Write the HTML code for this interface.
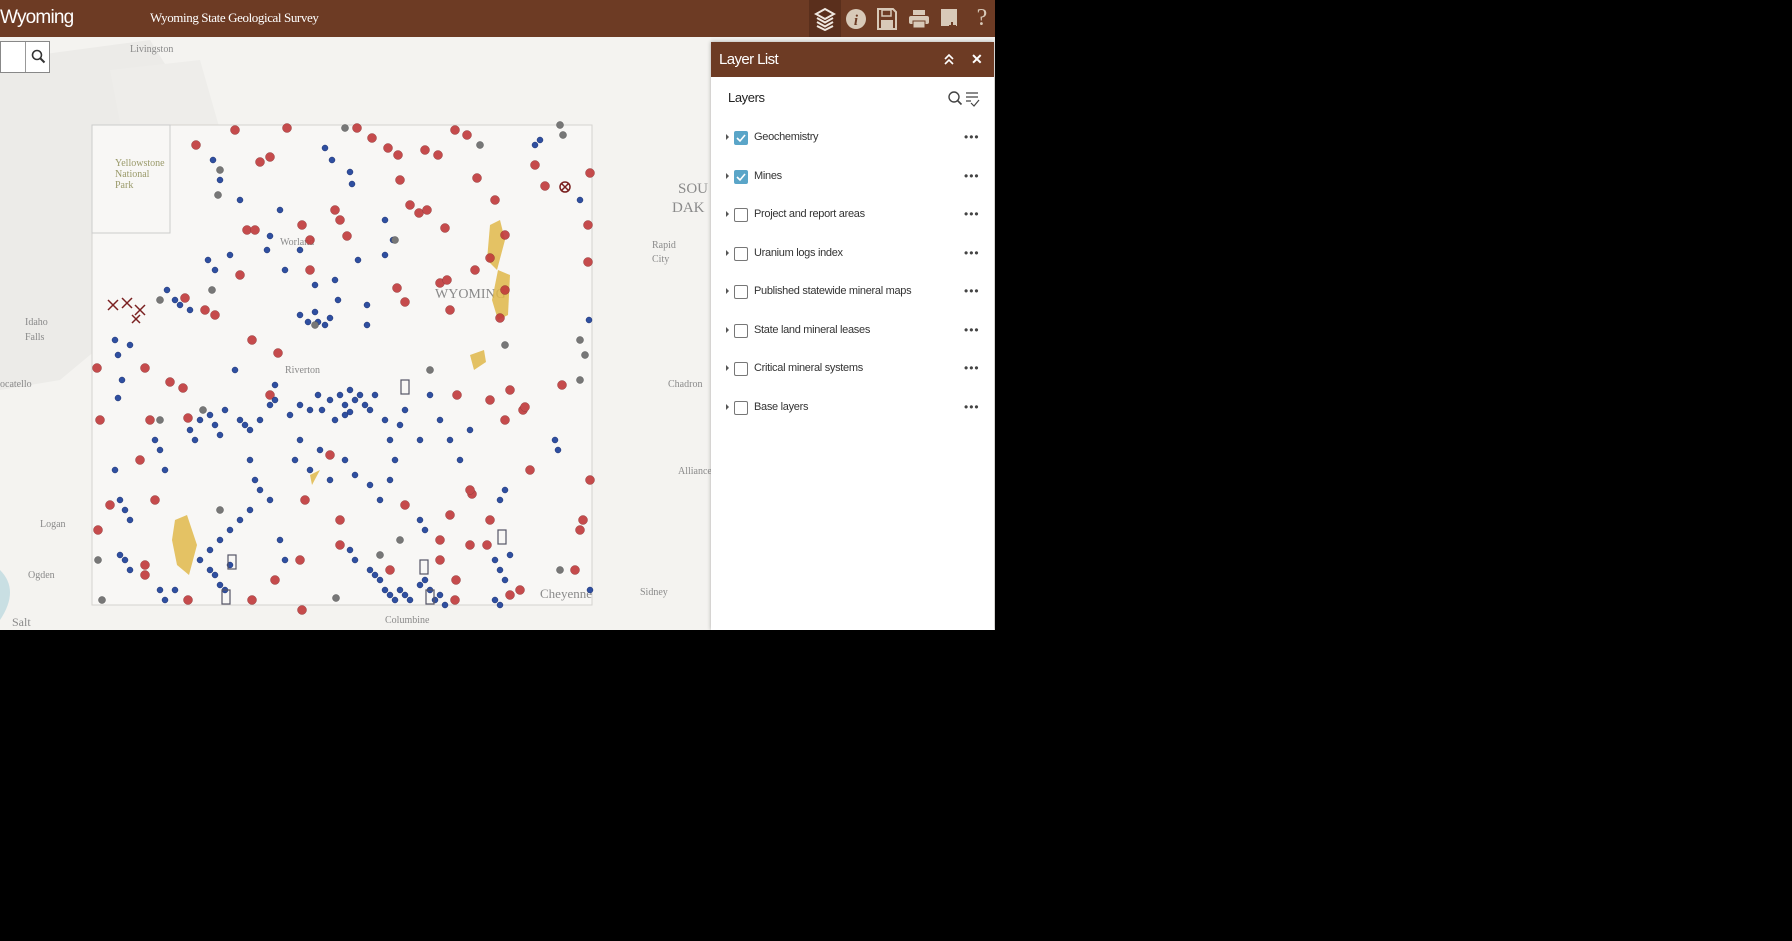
<!DOCTYPE html>
<html><head><meta charset="utf-8"><style>
*{margin:0;padding:0;box-sizing:border-box}
body{width:1792px;height:941px;background:#000;font-family:"Liberation Sans",sans-serif;position:relative;overflow:hidden}
#app{position:absolute;left:0;top:0;width:995px;height:630px;background:#f2f1ee;overflow:hidden}
#hdr{position:absolute;left:0;top:0;width:995px;height:37px;background:#6d3b24;color:#fff}
#hdr .t1{position:absolute;left:0;top:7px;font-size:19px;letter-spacing:-0.8px}
#hdr .t2{position:absolute;left:150px;top:10px;font-size:13px;font-family:"Liberation Serif",serif;letter-spacing:-0.4px}
.ic{position:absolute;top:0;width:32px;height:37px;display:flex;align-items:center;justify-content:center;color:#d8c9b8;font-size:22px}
#map{position:absolute;left:0;top:37px}
#srch{position:absolute;left:0;top:41px;width:50px;height:32px;background:#fff;border:1px solid #888}
#srch .b{position:absolute;left:24px;top:0;width:25px;height:30px;border-left:1px solid #999}
#panel{position:absolute;left:711px;top:42px;width:283px;height:588px;background:#fff;box-shadow:0 0 4px rgba(0,0,0,.3)}
#ph{height:35px;background:#6d3b24;color:#fff;font-size:15px;padding:9px 8px;letter-spacing:-0.6px;position:relative}
.row{position:absolute;left:0;width:283px;height:20px;font-size:11px;color:#333;letter-spacing:-0.3px}
.row .ar{position:absolute;left:15px;top:5px;width:0;height:0;border-left:3px solid #555;border-top:3px solid transparent;border-bottom:3px solid transparent}
.row .cb{position:absolute;left:23px;top:2px;width:14px;height:14px;border:1px solid #777;border-radius:2px;background:#fff}
.row .cb.on{background:#5aa5c8;border-color:#5aa5c8}
.row .tx{position:absolute;left:43px;top:2px}
.row .dt{position:absolute;left:253px;top:1px;font-size:12px;color:#444;letter-spacing:1px}
</style></head><body><div id="app">
<svg id="map" width="711" height="593" viewBox="0 37 711 593">
<rect x="0" y="37" width="711" height="593" fill="#f4f3f0"/>
<path d="M0 60 L150 40 L200 120 L170 260 L120 330 L60 380 L0 390Z" fill="#ecebe8"/>
<path d="M110 70 L200 60 L240 200 L200 300 L150 280Z" fill="#eeedea"/>
<rect x="92" y="125" width="500" height="480" fill="#f8f7f5" stroke="#d5d3cf"/>
<rect x="92" y="125" width="78" height="108" fill="none" stroke="#ccc"/>
<path d="M0 570 Q20 590 0 620Z" fill="#c9dfe3"/>
<g font-family="Liberation Serif,serif" font-size="10" fill="#8a8a8a">
<text x="130" y="52">Livingston</text><text x="115" y="166" fill="#9a9a6a">Yellowstone</text><text x="115" y="177" fill="#9a9a6a">National</text><text x="115" y="188" fill="#9a9a6a">Park</text>
<text x="25" y="325">Idaho</text><text x="25" y="340">Falls</text><text x="0" y="387">ocatello</text><text x="40" y="527">Logan</text><text x="28" y="578">Ogden</text><text x="12" y="626" font-size="12">Salt</text>
<text x="678" y="193" font-size="15">SOU</text><text x="672" y="212" font-size="15">DAK</text><text x="652" y="248">Rapid</text><text x="652" y="262">City</text>
<text x="668" y="387">Chadron</text><text x="678" y="474">Alliance</text><text x="640" y="595">Sidney</text><text x="540" y="598" font-size="13">Cheyenne</text>
<text x="385" y="623">Columbine</text><text x="280" y="245">Worland</text><text x="285" y="373">Riverton</text><text x="435" y="298" font-size="14">WYOMING</text>
</g>
<g fill="#e0b84a" opacity=".85">
<path d="M490 225 l10 -5 5 20 -8 30 -10 -10z"/><path d="M498 270 l12 5 -2 40 -10 5 -6 -20z"/><path d="M470 355 l14 -5 2 12 -12 8z"/><path d="M175 520 l12 -5 10 30 -8 30 -12 -10 -5 -25z"/><path d="M310 475 l10 -5 -8 15z"/>
</g>
<g id="dots">
<g fill="#c0393a" stroke="#8a2a2a" stroke-width=".5" opacity=".9">
<circle cx="235" cy="130" r="4.5"/><circle cx="287" cy="128" r="4.5"/><circle cx="357" cy="128" r="4.5"/><circle cx="455" cy="130" r="4.5"/><circle cx="467" cy="135" r="4.5"/><circle cx="372" cy="138" r="4.5"/><circle cx="388" cy="148" r="4.5"/><circle cx="196" cy="145" r="4.5"/><circle cx="260" cy="162" r="4.5"/><circle cx="270" cy="157" r="4.5"/><circle cx="398" cy="155" r="4.5"/><circle cx="425" cy="150" r="4.5"/><circle cx="438" cy="155" r="4.5"/><circle cx="535" cy="165" r="4.5"/><circle cx="590" cy="173" r="4.5"/><circle cx="545" cy="186" r="4.5"/><circle cx="477" cy="178" r="4.5"/><circle cx="495" cy="200" r="4.5"/><circle cx="410" cy="205" r="4.5"/><circle cx="419" cy="213" r="4.5"/><circle cx="427" cy="210" r="4.5"/><circle cx="400" cy="180" r="4.5"/><circle cx="335" cy="210" r="4.5"/><circle cx="340" cy="220" r="4.5"/><circle cx="247" cy="230" r="4.5"/><circle cx="255" cy="230" r="4.5"/><circle cx="302" cy="225" r="4.5"/><circle cx="310" cy="240" r="4.5"/><circle cx="347" cy="236" r="4.5"/><circle cx="445" cy="228" r="4.5"/><circle cx="505" cy="235" r="4.5"/><circle cx="588" cy="225" r="4.5"/><circle cx="588" cy="262" r="4.5"/><circle cx="240" cy="275" r="4.5"/><circle cx="310" cy="270" r="4.5"/><circle cx="397" cy="288" r="4.5"/><circle cx="440" cy="283" r="4.5"/><circle cx="447" cy="280" r="4.5"/><circle cx="475" cy="270" r="4.5"/><circle cx="490" cy="258" r="4.5"/><circle cx="505" cy="290" r="4.5"/><circle cx="405" cy="302" r="4.5"/><circle cx="450" cy="310" r="4.5"/><circle cx="500" cy="318" r="4.5"/><circle cx="205" cy="310" r="4.5"/><circle cx="215" cy="315" r="4.5"/><circle cx="185" cy="298" r="4.5"/><circle cx="252" cy="340" r="4.5"/><circle cx="278" cy="353" r="4.5"/><circle cx="97" cy="368" r="4.5"/><circle cx="145" cy="368" r="4.5"/><circle cx="170" cy="382" r="4.5"/><circle cx="183" cy="388" r="4.5"/><circle cx="100" cy="420" r="4.5"/><circle cx="150" cy="420" r="4.5"/><circle cx="140" cy="460" r="4.5"/><circle cx="188" cy="418" r="4.5"/><circle cx="270" cy="395" r="4.5"/><circle cx="457" cy="395" r="4.5"/><circle cx="490" cy="400" r="4.5"/><circle cx="510" cy="390" r="4.5"/><circle cx="523" cy="410" r="4.5"/><circle cx="505" cy="420" r="4.5"/><circle cx="525" cy="407" r="4.5"/><circle cx="562" cy="385" r="4.5"/><circle cx="590" cy="480" r="4.5"/><circle cx="530" cy="470" r="4.5"/><circle cx="583" cy="520" r="4.5"/><circle cx="580" cy="530" r="4.5"/><circle cx="575" cy="570" r="4.5"/><circle cx="472" cy="494" r="4.5"/><circle cx="440" cy="540" r="4.5"/><circle cx="470" cy="545" r="4.5"/><circle cx="490" cy="520" r="4.5"/><circle cx="456" cy="580" r="4.5"/><circle cx="440" cy="560" r="4.5"/><circle cx="520" cy="590" r="4.5"/><circle cx="510" cy="595" r="4.5"/><circle cx="300" cy="560" r="4.5"/><circle cx="340" cy="545" r="4.5"/><circle cx="302" cy="610" r="4.5"/><circle cx="252" cy="600" r="4.5"/><circle cx="188" cy="600" r="4.5"/><circle cx="145" cy="565" r="4.5"/><circle cx="145" cy="575" r="4.5"/><circle cx="110" cy="505" r="4.5"/><circle cx="155" cy="500" r="4.5"/><circle cx="98" cy="530" r="4.5"/><circle cx="275" cy="580" r="4.5"/><circle cx="405" cy="505" r="4.5"/><circle cx="450" cy="515" r="4.5"/><circle cx="390" cy="570" r="4.5"/><circle cx="305" cy="500" r="4.5"/><circle cx="340" cy="520" r="4.5"/><circle cx="330" cy="455" r="4.5"/><circle cx="470" cy="490" r="4.5"/><circle cx="487" cy="545" r="4.5"/><circle cx="455" cy="600" r="4.5"/>
</g>
<g fill="#2f4fa0" stroke="#1c3070" stroke-width=".5">
<circle cx="213" cy="160" r="3"/><circle cx="220" cy="180" r="3"/><circle cx="325" cy="148" r="3"/><circle cx="332" cy="160" r="3"/><circle cx="350" cy="172" r="3"/><circle cx="352" cy="184" r="3"/><circle cx="535" cy="145" r="3"/><circle cx="540" cy="140" r="3"/><circle cx="580" cy="200" r="3"/><circle cx="589" cy="320" r="3"/><circle cx="270" cy="236" r="3"/><circle cx="267" cy="250" r="3"/><circle cx="385" cy="220" r="3"/><circle cx="393" cy="240" r="3"/><circle cx="385" cy="255" r="3"/><circle cx="358" cy="260" r="3"/><circle cx="338" cy="300" r="3"/><circle cx="315" cy="312" r="3"/><circle cx="300" cy="315" r="3"/><circle cx="308" cy="322" r="3"/><circle cx="318" cy="322" r="3"/><circle cx="325" cy="325" r="3"/><circle cx="330" cy="318" r="3"/><circle cx="285" cy="270" r="3"/><circle cx="300" cy="250" r="3"/><circle cx="315" cy="285" r="3"/><circle cx="335" cy="280" r="3"/><circle cx="367" cy="305" r="3"/><circle cx="367" cy="325" r="3"/><circle cx="167" cy="290" r="3"/><circle cx="175" cy="300" r="3"/><circle cx="180" cy="305" r="3"/><circle cx="190" cy="310" r="3"/><circle cx="115" cy="340" r="3"/><circle cx="130" cy="345" r="3"/><circle cx="118" cy="355" r="3"/><circle cx="122" cy="380" r="3"/><circle cx="118" cy="398" r="3"/><circle cx="235" cy="370" r="3"/><circle cx="275" cy="385" r="3"/><circle cx="225" cy="410" r="3"/><circle cx="240" cy="420" r="3"/><circle cx="245" cy="425" r="3"/><circle cx="250" cy="430" r="3"/><circle cx="260" cy="420" r="3"/><circle cx="270" cy="405" r="3"/><circle cx="275" cy="400" r="3"/><circle cx="290" cy="415" r="3"/><circle cx="300" cy="405" r="3"/><circle cx="310" cy="410" r="3"/><circle cx="318" cy="395" r="3"/><circle cx="322" cy="410" r="3"/><circle cx="330" cy="400" r="3"/><circle cx="340" cy="395" r="3"/><circle cx="345" cy="405" r="3"/><circle cx="350" cy="390" r="3"/><circle cx="355" cy="400" r="3"/><circle cx="360" cy="395" r="3"/><circle cx="365" cy="405" r="3"/><circle cx="370" cy="410" r="3"/><circle cx="345" cy="415" r="3"/><circle cx="335" cy="420" r="3"/><circle cx="350" cy="412" r="3"/><circle cx="375" cy="395" r="3"/><circle cx="385" cy="420" r="3"/><circle cx="390" cy="440" r="3"/><circle cx="395" cy="460" r="3"/><circle cx="400" cy="425" r="3"/><circle cx="405" cy="410" r="3"/><circle cx="420" cy="440" r="3"/><circle cx="430" cy="395" r="3"/><circle cx="440" cy="420" r="3"/><circle cx="450" cy="440" r="3"/><circle cx="460" cy="460" r="3"/><circle cx="470" cy="430" r="3"/><circle cx="300" cy="440" r="3"/><circle cx="295" cy="460" r="3"/><circle cx="310" cy="470" r="3"/><circle cx="320" cy="450" r="3"/><circle cx="330" cy="480" r="3"/><circle cx="345" cy="460" r="3"/><circle cx="355" cy="475" r="3"/><circle cx="370" cy="485" r="3"/><circle cx="380" cy="500" r="3"/><circle cx="390" cy="480" r="3"/><circle cx="260" cy="490" r="3"/><circle cx="270" cy="500" r="3"/><circle cx="250" cy="510" r="3"/><circle cx="240" cy="520" r="3"/><circle cx="230" cy="530" r="3"/><circle cx="220" cy="540" r="3"/><circle cx="210" cy="550" r="3"/><circle cx="200" cy="560" r="3"/><circle cx="210" cy="570" r="3"/><circle cx="215" cy="575" r="3"/><circle cx="220" cy="585" r="3"/><circle cx="225" cy="590" r="3"/><circle cx="230" cy="565" r="3"/><circle cx="280" cy="540" r="3"/><circle cx="285" cy="560" r="3"/><circle cx="120" cy="555" r="3"/><circle cx="125" cy="560" r="3"/><circle cx="130" cy="570" r="3"/><circle cx="175" cy="590" r="3"/><circle cx="165" cy="600" r="3"/><circle cx="160" cy="590" r="3"/><circle cx="370" cy="570" r="3"/><circle cx="375" cy="575" r="3"/><circle cx="380" cy="580" r="3"/><circle cx="385" cy="590" r="3"/><circle cx="390" cy="595" r="3"/><circle cx="395" cy="600" r="3"/><circle cx="400" cy="590" r="3"/><circle cx="405" cy="595" r="3"/><circle cx="410" cy="600" r="3"/><circle cx="420" cy="585" r="3"/><circle cx="425" cy="580" r="3"/><circle cx="430" cy="590" r="3"/><circle cx="435" cy="600" r="3"/><circle cx="440" cy="595" r="3"/><circle cx="445" cy="605" r="3"/><circle cx="495" cy="560" r="3"/><circle cx="500" cy="570" r="3"/><circle cx="505" cy="580" r="3"/><circle cx="510" cy="555" r="3"/><circle cx="495" cy="600" r="3"/><circle cx="500" cy="605" r="3"/><circle cx="558" cy="450" r="3"/><circle cx="555" cy="440" r="3"/><circle cx="590" cy="590" r="3"/><circle cx="500" cy="500" r="3"/><circle cx="505" cy="490" r="3"/><circle cx="420" cy="520" r="3"/><circle cx="425" cy="530" r="3"/><circle cx="190" cy="430" r="3"/><circle cx="195" cy="440" r="3"/><circle cx="200" cy="420" r="3"/><circle cx="210" cy="415" r="3"/><circle cx="215" cy="425" r="3"/><circle cx="220" cy="435" r="3"/><circle cx="155" cy="440" r="3"/><circle cx="160" cy="450" r="3"/><circle cx="165" cy="470" r="3"/><circle cx="115" cy="470" r="3"/><circle cx="120" cy="500" r="3"/><circle cx="125" cy="510" r="3"/><circle cx="130" cy="520" r="3"/><circle cx="250" cy="460" r="3"/><circle cx="255" cy="480" r="3"/><circle cx="350" cy="550" r="3"/><circle cx="355" cy="560" r="3"/><circle cx="280" cy="210" r="3"/><circle cx="240" cy="200" r="3"/><circle cx="230" cy="255" r="3"/><circle cx="215" cy="270" r="3"/><circle cx="208" cy="260" r="3"/>
</g>
<g fill="#777" stroke="#555" stroke-width=".5">
<circle cx="345" cy="128" r="3.5"/><circle cx="560" cy="125" r="3.5"/><circle cx="563" cy="135" r="3.5"/><circle cx="480" cy="145" r="3.5"/><circle cx="220" cy="170" r="3.5"/><circle cx="218" cy="195" r="3.5"/><circle cx="395" cy="240" r="3.5"/><circle cx="160" cy="300" r="3.5"/><circle cx="212" cy="290" r="3.5"/><circle cx="580" cy="340" r="3.5"/><circle cx="585" cy="355" r="3.5"/><circle cx="580" cy="380" r="3.5"/><circle cx="505" cy="345" r="3.5"/><circle cx="203" cy="410" r="3.5"/><circle cx="160" cy="420" r="3.5"/><circle cx="98" cy="560" r="3.5"/><circle cx="102" cy="600" r="3.5"/><circle cx="336" cy="598" r="3.5"/><circle cx="400" cy="540" r="3.5"/><circle cx="380" cy="555" r="3.5"/><circle cx="220" cy="510" r="3.5"/><circle cx="560" cy="570" r="3.5"/><circle cx="430" cy="370" r="3.5"/><circle cx="315" cy="325" r="3.5"/>
</g>
<g fill="none" stroke="#556" stroke-width="1.2">
<rect x="401" y="380" width="8" height="14"/><rect x="498" y="530" width="8" height="14"/><rect x="222" y="590" width="8" height="14"/><rect x="228" y="555" width="8" height="14"/><rect x="420" y="560" width="8" height="14"/><rect x="426" y="590" width="8" height="14"/>
</g>
<g stroke="#7a2020" stroke-width="1.5">
<path d="M108 300 l10 10 M118 300 l-10 10 M122 298 l10 10 M132 298 l-10 10 M135 305 l10 10 M145 305 l-10 10 M132 315 l8 8 M140 315 l-8 8"/>
<circle cx="565" cy="187" r="5" fill="none"/><path d="M561 183 l8 8 M569 183 l-8 8"/>
</g>
</g>
</svg>
<div id="hdr"><div class="t1">Wyoming</div><div class="t2">Wyoming State Geological Survey</div>
<div class="ic" style="left:809px;background:#5a2f1c"><svg width="22" height="24" viewBox="0 0 22 24"><path d="M11 2 L20 7 L11 12 L2 7Z M3 11 L11 15.5 L19 11 M3 15 L11 19.5 L19 15 M3 19 L11 23 L19 19" fill="none" stroke="#f0e8e0" stroke-width="2"/></svg></div>
<div class="ic" style="left:840px"><svg width="22" height="22"><circle cx="11" cy="11" r="10" fill="#d8c9b8"/><text x="11" y="17" text-anchor="middle" font-size="15" font-weight="bold" font-style="italic" fill="#6d3b24" font-family="Liberation Serif">i</text></svg></div>
<div class="ic" style="left:871px"><svg width="20" height="22"><path d="M1 1h15l3 3v17H1Z" fill="none" stroke="#d8c9b8" stroke-width="2"/><rect x="5" y="2" width="9" height="6" fill="none" stroke="#d8c9b8" stroke-width="1.5"/><rect x="4" y="12" width="12" height="8" fill="#d8c9b8"/></svg></div>
<div class="ic" style="left:903px"><svg width="22" height="20"><rect x="5" y="1" width="12" height="5" fill="#d8c9b8"/><rect x="1" y="7" width="20" height="8" rx="2" fill="#d8c9b8"/><rect x="5" y="12" width="12" height="7" fill="#d8c9b8" stroke="#6d3b24"/></svg></div>
<div class="ic" style="left:934px"><svg width="20" height="22"><rect x="1" y="1" width="16" height="17" fill="#d8c9b8"/><path d="M12 14v8M9 18h7" stroke="#6d3b24" stroke-width="2"/></svg></div>
<div class="ic" style="left:966px;font-family:Liberation Serif;font-size:24px">?</div>
</div>
<div id="srch"><div class="b"><svg width="24" height="30"><circle cx="11" cy="13" r="4.5" fill="none" stroke="#333" stroke-width="1.6"/><path d="M14.5 16.5 l4 4" stroke="#333" stroke-width="2"/></svg></div></div>
<div id="panel">
<div id="ph">Layer List<svg style="position:absolute;left:232px;top:11px" width="12" height="12"><path d="M2 6l4-4 4 4M2 11l4-4 4 4" stroke="#fff" stroke-width="1.6" fill="none"/></svg><span style="position:absolute;left:260px;top:9px;font-size:14px;font-weight:bold">✕</span></div>
<div style="position:absolute;left:17px;top:48px;font-size:13px;color:#222;letter-spacing:-0.4px">Layers</div>
<svg style="position:absolute;left:236px;top:48px" width="36" height="18"><circle cx="7" cy="7" r="5" fill="none" stroke="#444" stroke-width="1.4"/><path d="M10.5 10.5l4 4" stroke="#444" stroke-width="1.6"/><path d="M19 3h12M19 7h12M19 11h5M24 13l3 3 5-6" stroke="#444" stroke-width="1.2" fill="none"/></svg>
<div class="row" style="top:87px"><i class="ar"></i><i class="cb on"><svg width="12" height="12"><path d="M2 6l3 3 5-6" stroke="#fff" stroke-width="1.6" fill="none"/></svg></i><span class="tx">Geochemistry</span><span class="dt">•••</span></div>
<div class="row" style="top:126px"><i class="ar"></i><i class="cb on"><svg width="12" height="12"><path d="M2 6l3 3 5-6" stroke="#fff" stroke-width="1.6" fill="none"/></svg></i><span class="tx">Mines</span><span class="dt">•••</span></div>
<div class="row" style="top:164px"><i class="ar"></i><i class="cb"></i><span class="tx">Project and report areas</span><span class="dt">•••</span></div>
<div class="row" style="top:203px"><i class="ar"></i><i class="cb"></i><span class="tx">Uranium logs index</span><span class="dt">•••</span></div>
<div class="row" style="top:241px"><i class="ar"></i><i class="cb"></i><span class="tx">Published statewide mineral maps</span><span class="dt">•••</span></div>
<div class="row" style="top:280px"><i class="ar"></i><i class="cb"></i><span class="tx">State land mineral leases</span><span class="dt">•••</span></div>
<div class="row" style="top:318px"><i class="ar"></i><i class="cb"></i><span class="tx">Critical mineral systems</span><span class="dt">•••</span></div>
<div class="row" style="top:357px"><i class="ar"></i><i class="cb"></i><span class="tx">Base layers</span><span class="dt">•••</span></div>
</div>
</div></body></html>
